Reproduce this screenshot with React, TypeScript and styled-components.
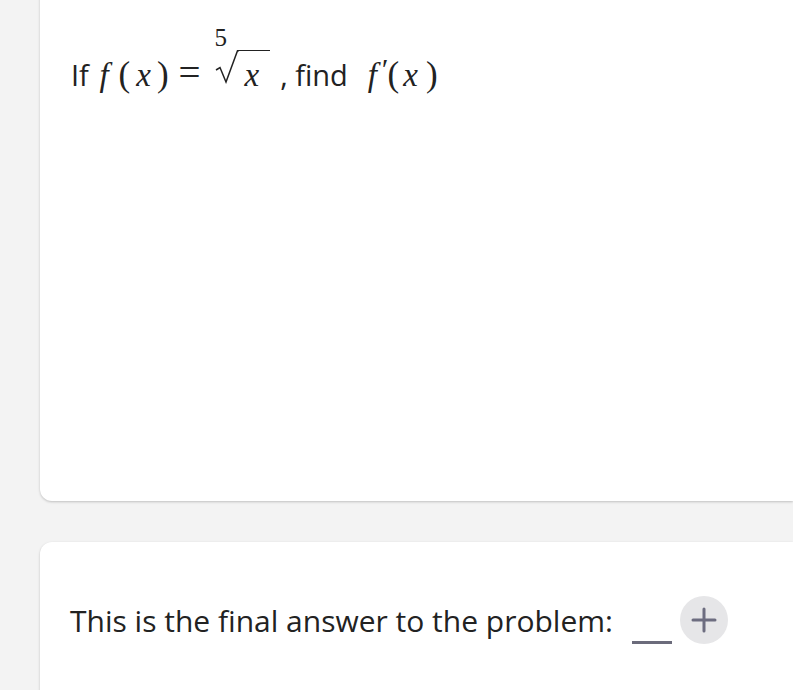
import styled, { createGlobalStyle } from "styled-components"

const GlobalStyle = createGlobalStyle`
  html, body {
    margin: 0;
    padding: 0;
    background: #f3f3f3;
    font-family: "Open Sans", "Noto Sans", sans-serif;
    color: #222;
    overflow: hidden;
  }
`

const Page = styled.div`
  display: flex;
  flex-direction: column;
  gap: 41px;
  padding-left: 40px;
  margin-top: -20px;
  width: 793px;
  height: 710px;
  box-sizing: border-box;
`

const Card = styled.div<{ $height: number }>`
  background: #fff;
  border-radius: 12px 0 0 12px;
  height: ${p => p.$height}px;
  box-shadow: 0 1px 3px rgba(0, 0, 0, 0.14), 0 1px 2px rgba(0, 0, 0, 0.08);
  box-sizing: border-box;
  flex-shrink: 0;
`

const Question = styled.div`
  padding: 70px 0 0 31px;
  font-size: 29px;
  line-height: 40px;
  white-space: nowrap;
`

const Words = styled.span<{ $l?: number; $r?: number }>`
  margin-left: ${p => p.$l ?? 0}px;
  margin-right: ${p => p.$r ?? 0}px;
`

const MathRun = styled.span`
  font-family: "Liberation Serif", "DejaVu Serif", serif;
  font-size: 33px;
  line-height: 1;
`

const Var = styled.i<{ $l?: number; $r?: number }>`
  font-style: italic;
  display: inline-block;
  margin-left: ${p => p.$l ?? 0}px;
  margin-right: ${p => p.$r ?? 0}px;
`

const Paren = styled.span`
  display: inline-block;
  font-size: 35px;
`

const Eq = styled.span`
  display: inline-block;
  font-size: 39px;
  margin: 0 14px 0 10px;
`

const Root = styled.span`
  position: relative;
  display: inline-block;
  padding-left: 22px;
`

const Index = styled.span`
  position: absolute;
  left: 0;
  top: -25px;
  font-size: 25px;
`

const RadicalSign = styled.svg`
  position: absolute;
  left: 0;
  top: 0;
`

const Radicand = styled.span`
  display: inline-block;
  border-top: 1.5px solid #222;
  padding: 8px 11px 0 8px;
`

const Prime = styled.span`
  display: inline-block;
  font-size: 30px;
  font-style: italic;
  vertical-align: 7px;
  margin: 0 1px 0 3px;
`

const Answer = styled.div`
  padding: 54px 0 0 30px;
  font-size: 30px;
  display: flex;
  align-items: center;
`

const Blank = styled.span`
  width: 40px;
  height: 3px;
  background: #6b6b7b;
  margin: 0 8px 0 19px;
  align-self: flex-end;
`

const PlusButton = styled.button`
  width: 48px;
  height: 48px;
  border-radius: 50%;
  border: none;
  background: #e6e6e8;
  display: flex;
  align-items: center;
  justify-content: center;
  padding: 0;
`

export default function App() {
  return (
    <>
      <GlobalStyle />
      <Page>
        <Card $height={521}>
          <Question>
            <Words>If </Words>
            <MathRun>
              <Var $l={3} $r={10}>f</Var>
              <Paren>(</Paren>
              <Var $l={6} $r={6}>x</Var>
              <Paren>)</Paren>
              <Eq>=</Eq>
              <Root>
                <Index>5</Index>
                <RadicalSign width="24" height="34" viewBox="0 0 24 34">
                  <path d="M1 20 L5 17.5 L11 32 L22.5 0.75 L24 0.75" fill="none" stroke="#222" strokeWidth="1.5" strokeLinejoin="miter" />
                </RadicalSign>
                <Radicand><Var>x</Var></Radicand>
              </Root>
            </MathRun>
            <Words $l={10} $r={10}>, find</Words>
            <MathRun>
              <Var $l={10}>f</Var>
              <Prime>′</Prime>
              <Paren>(</Paren>
              <Var $l={4} $r={8}>x</Var>
              <Paren>)</Paren>
            </MathRun>
          </Question>
        </Card>
        <Card $height={170}>
          <Answer>
            <span>This is the final answer to the problem:</span>
            <Blank />
            <PlusButton aria-label="add">
              <svg width="28" height="28" viewBox="0 0 28 28">
                <path d="M14 3v22M3 14h22" stroke="#6d6d80" strokeWidth="3" strokeLinecap="round" />
              </svg>
            </PlusButton>
          </Answer>
        </Card>
      </Page>
    </>
  )
}
